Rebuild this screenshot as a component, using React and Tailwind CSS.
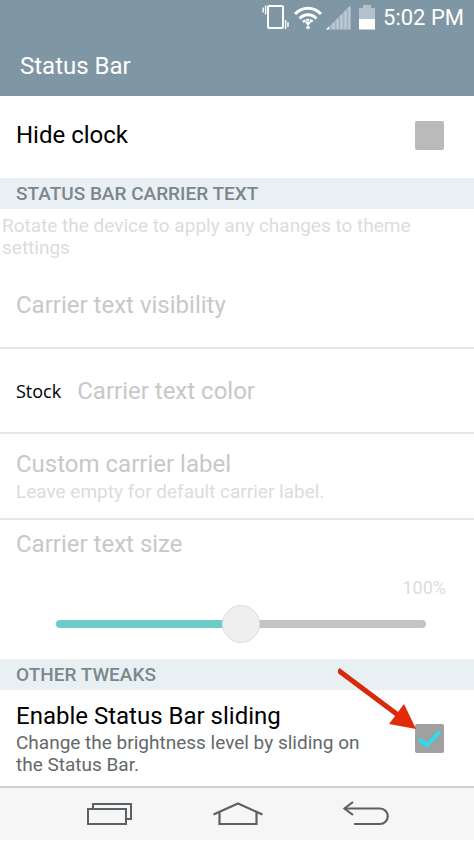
import { useState } from "react";

function VibrateIcon() {
  return (
    <svg width="28" height="26" viewBox="0 0 28 26" fill="none" stroke="#fff">
      <rect x="6" y="2" width="15" height="22" rx="1" strokeWidth="2" />
      <path d="M3.6 1.5v9M1.2 3.500v5" strokeWidth="1.400" />
      <path d="M23.6 16v9M26 18v5" strokeWidth="1.400" />
    </svg>
  );
}

function WifiIcon() {
  return (
    <svg width="28" height="26" viewBox="0 0 28 26" fill="none" stroke="#fff">
      <path d="M1 10C8.500 2.200 19.500 2.200 27 10" strokeWidth="3" />
      <path d="M5.500 14.500C10.500 9.500 17.500 9.500 22.500 14.500" strokeWidth="2.800" />
      <path d="M9 18C12 15.200 16 15.200 19 18" strokeWidth="2.400" strokeDasharray="3 0.8" />
      <path d="M10.500 17.500 14 22 17.500 17.500Z" fill="#fff" stroke="none" />
      <circle cx="14" cy="23.500" r="1.800" fill="#fff" stroke="none" />
    </svg>
  );
}

function SignalIcon() {
  return (
    <svg width="25" height="26" viewBox="0 0 25 26">
      <path d="M0 25.500 24.500 1V25.500Z" fill="#fff" opacity="0.3" />
      <path
        d="M7.500 19v6.500M11.500 15v10.500M15.500 11v14.500M19.500 7v18.500M23.500 3v22.500"
        stroke="#fff"
        strokeWidth="2"
        opacity="0.3"
      />
      <path d="M0 25.500 3 22.500V25.500Z" fill="#fff" />
    </svg>
  );
}

function BatteryIcon() {
  return (
    <svg width="16" height="26" viewBox="0 0 16 26">
      <path d="M4 1h8v3h4v11H0V4h4Z" fill="#fff" opacity="0.42" />
      <rect y="15" width="16" height="10.500" fill="#fff" />
    </svg>
  );
}

function SectionHeader({ children }) {
  return (
    <h2 className="bg-[#e8f0f3] px-4 py-1 text-[19px] leading-[23px] font-medium text-[#7c878c]">
      {children}
    </h2>
  );
}

function CheckBox({ id, checked, onChange }) {
  return (
    <span className="relative flex shrink-0">
      <input
        id={id}
        type="checkbox"
        checked={checked}
        onChange={(e) => onChange(e.target.checked)}
        className="peer size-[29px] appearance-none rounded-xs bg-[#bababa] checked:bg-[#a0a0a0]"
      />
      <svg
        viewBox="0 0 28 28"
        className="pointer-events-none absolute inset-0 hidden size-[29px] peer-checked:block"
        fill="none"
        stroke="#25e0ee"
        strokeWidth="3.600"
      >
        <path d="M4 14.500 11 20.500 24 7.500" />
      </svg>
    </span>
  );
}

function NavBar() {
  return (
    <nav className="border-t-2 border-[#cfd0d1] bg-[#f6f6f6]">
      <div className="flex h-13 items-center justify-between px-21">
        <button aria-label="Recent apps">
          <svg width="50" height="28" viewBox="0 0 50 28" fill="none" stroke="#596165" strokeWidth="2">
            <rect x="4" y="9" width="38" height="15" />
            <path d="M9 9V4h38v15h-5" />
          </svg>
        </button>
        <button aria-label="Home">
          <svg width="52" height="28" viewBox="0 0 52 28" fill="none" stroke="#596165" strokeWidth="2.200">
            <path d="M1.500 14.500 26 3.500 50.500 14.500" />
            <path d="M7.500 12.500V24H44.500V12.500" />
          </svg>
        </button>
        <button aria-label="Back">
          <svg width="48" height="28" viewBox="0 0 48 28" fill="none" stroke="#596165" strokeWidth="2.200">
            <path d="M11 2 2.500 8.500 11 15" />
            <path d="M2.500 8.500H38a7.750 7.750 0 0 1 0 15.500H12" />
          </svg>
        </button>
      </div>
    </nav>
  );
}

export default function App() {
  const [hideClock, setHideClock] = useState(false);
  const [sliding, setSliding] = useState(true);
  const [textSize, setTextSize] = useState(100);

  return (
    <div className="min-h-screen bg-white font-[Roboto,sans-serif] text-black">
      {/* HEADER */}
      <header className="bg-[#7f96a5] text-white">
        <div className="flex h-[34px] items-center justify-end gap-1 pr-2.5">
          <VibrateIcon />
          <WifiIcon />
          <SignalIcon />
          <span className="mx-1 flex">
            <BatteryIcon />
          </span>
          <span className="text-[22px]">5:02 PM</span>
        </div>
        <h1 className="h-[62px] px-5 text-2xl leading-[64px]">Status Bar</h1>
      </header>

      <main>
        <div className="flex h-[82px] items-center justify-between pr-[30px] pb-1 pl-4">
          <label htmlFor="hide-clock" className="text-2xl">
            Hide clock
          </label>
          <CheckBox id="hide-clock" checked={hideClock} onChange={setHideClock} />
        </div>

        {/* CARRIER TEXT */}
        <SectionHeader>STATUS BAR CARRIER TEXT</SectionHeader>
        <p className="px-0.5 pt-1.5 text-[19px] leading-[22px] text-[#dcdcdc]">
          Rotate the device to apply any changes to theme settings
        </p>
        <div className="flex h-[90px] items-center border-b-2 border-[#e6e6e6] px-4 pt-1 text-2xl text-[#c8c8c8]">
          Carrier text visibility
        </div>
        <div className="flex h-[85px] items-center gap-4 border-b-2 border-[#e6e6e6] px-4">
          <span className="font-['Open_Sans',sans-serif] text-lg">Stock</span>
          <span className="text-2xl text-[#c8c8c8]">Carrier text color</span>
        </div>
        <div className="flex h-[86px] flex-col justify-center border-b-2 border-[#e6e6e6] px-4">
          <span className="text-2xl text-[#c8c8c8]">Custom carrier label</span>
          <span className="text-[19px] leading-6 text-[#dcdcdc]">
            Leave empty for default carrier label.
          </span>
        </div>
        <div className="flex h-[139px] flex-col px-4 pt-2">
          <label htmlFor="text-size" className="text-2xl text-[#c8c8c8]">
            Carrier text size
          </label>
          <output htmlFor="text-size" className="mt-4 mr-3 text-right text-lg leading-6 text-[#dcdcdc]">
            {textSize}%
          </output>
          <div className="mt-5 pr-8 pl-10">
            <input
              id="text-size"
              type="range"
              min="0"
              max="200"
              value={textSize}
              onChange={(e) => setTextSize(Number(e.target.value))}
              style={{
                backgroundImage: `linear-gradient(to right, #6fcbc9 ${textSize / 2}%, #c4c4c4 ${textSize / 2}%)`,
              }}
              className="block h-2 w-full appearance-none rounded-full [&::-webkit-slider-thumb]:size-[38px] [&::-webkit-slider-thumb]:appearance-none [&::-webkit-slider-thumb]:rounded-full [&::-webkit-slider-thumb]:border [&::-webkit-slider-thumb]:border-[#dedede] [&::-webkit-slider-thumb]:bg-[#efefef]"
            />
          </div>
        </div>

        {/* OTHER TWEAKS */}
        <SectionHeader>OTHER TWEAKS</SectionHeader>
        <div className="relative flex h-24 items-center justify-between pr-[30px] pl-4">
          <label htmlFor="sliding" className="w-[350px]">
            <span className="block text-2xl">Enable Status Bar sliding</span>
            <span className="block text-[19px] leading-[22px] text-[#63686b]">
              Change the brightness level by sliding on the Status Bar.
            </span>
          </label>
          <CheckBox id="sliding" checked={sliding} onChange={setSliding} />
          <svg
            width="80"
            height="64"
            viewBox="0 0 80 64"
            className="pointer-events-none absolute -top-6 right-14"
            fill="#e22b0b"
          >
            <path d="M0 4 60 49" stroke="#d9290c" strokeWidth="5" />
            <path d="M66 38 78 63 51 58Z" />
          </svg>
        </div>
      </main>

      <NavBar />
    </div>
  );
}
